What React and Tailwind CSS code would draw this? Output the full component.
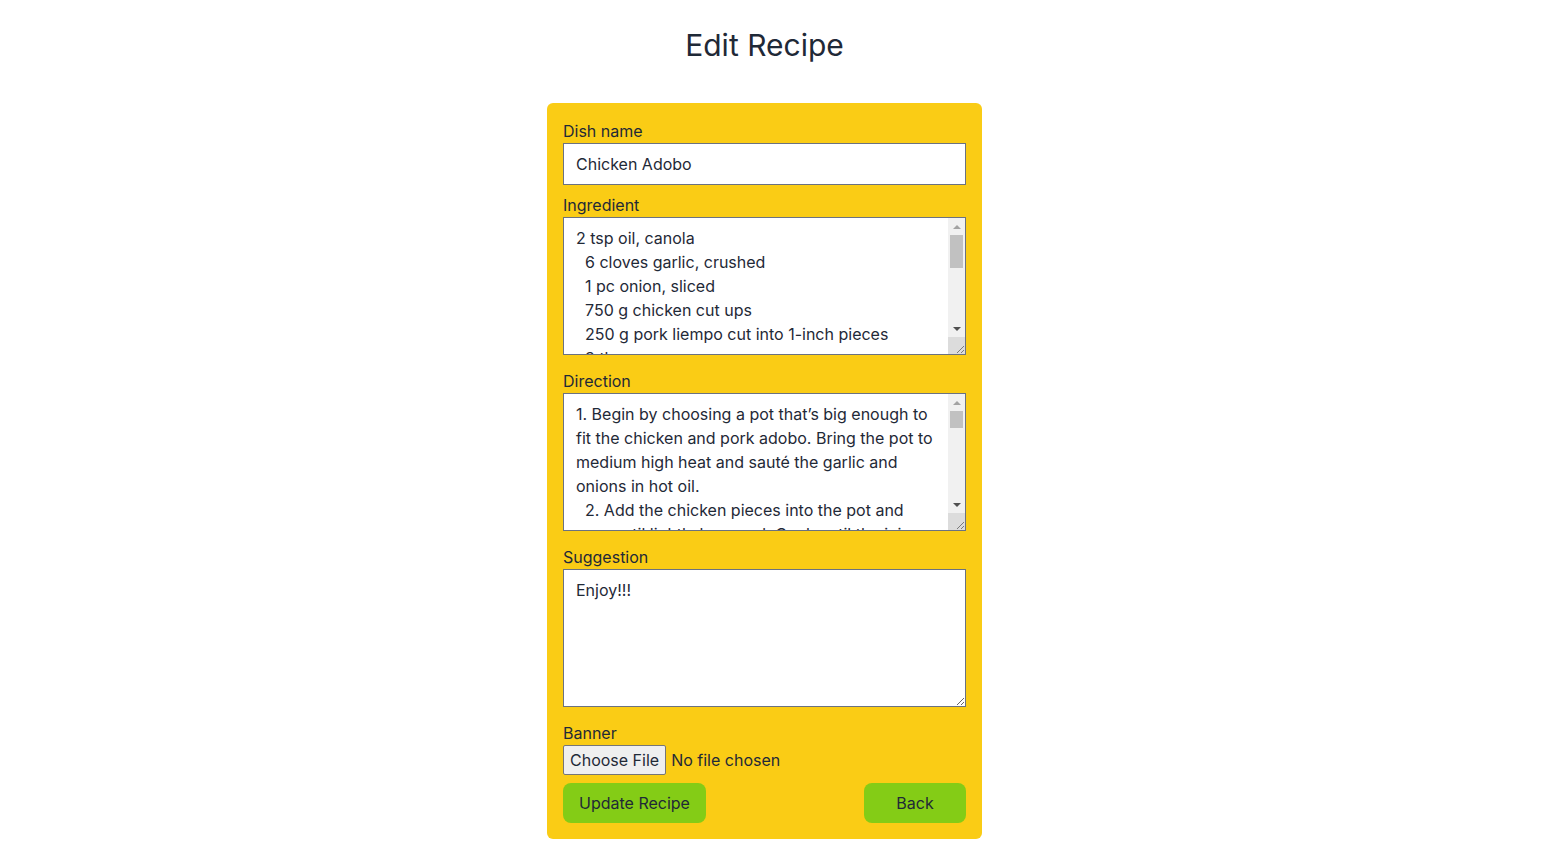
import { useState } from "react";

const INGREDIENTS = `2 tsp oil, canola
  6 cloves garlic, crushed
  1 pc onion, sliced
  750 g chicken cut ups
  250 g pork liempo cut into 1-inch pieces
  3 tbsp soy sauce
  1/2 cup vinegar
  1 cup water
  3 pcs bay leaves
  1 tsp whole peppercorns
  2 tbsp brown sugar
  1 pc potato, quartered
  salt to taste`;

const DIRECTIONS = `1. Begin by choosing a pot that’s big enough to fit the chicken and pork adobo. Bring the pot to medium high heat and sauté the garlic and onions in hot oil.
  2. Add the chicken pieces into the pot and sear until lightly browned. Cook until the juices run clear.
  3. Add the pork liempo and cook until the fat renders and the pieces turn golden.
  4. Pour in the soy sauce, vinegar and water. Add the bay leaves and peppercorns. Let it boil without stirring for 5 minutes.
  5. Lower the heat, cover and simmer for 30 to 40 minutes or until the meat is tender.
  6. Add the brown sugar and potatoes, then season with salt. Simmer until the sauce thickens and coats the meat.
  7. Remove the bay leaves, taste and adjust the seasoning.
  8. Serve hot with steamed rice.`;

// classic chrome scrollbar column drawn beside the textarea
function ScrollBar({ thumb }) {
  return (
    <div className="flex w-[17px] shrink-0 flex-col bg-[#f1f1f1]">
      <div className="flex h-[17px] items-center justify-center">
        <svg width="8" height="4" viewBox="0 0 8 4">
          <path d="M0 4 L4 0 L8 4 Z" fill="#a3a3a3" />
        </svg>
      </div>
      <div className="flex-1 px-[2px]">
        <div className={`${thumb} bg-[#c1c1c1]`} />
      </div>
      <div className="flex h-[17px] items-center justify-center">
        <svg width="8" height="4" viewBox="0 0 8 4">
          <path d="M0 0 L8 0 L4 4 Z" fill="#505050" />
        </svg>
      </div>
      <div className="h-[17px] bg-[#dcdcdc]">
        <svg width="17" height="17" viewBox="0 0 17 17">
          <path d="M16 9 L9 16 M16 13 L13 16" stroke="#7a7a7a" strokeWidth="1" />
        </svg>
      </div>
    </div>
  );
}

function ScrollArea({ value, onChange, thumb }) {
  return (
    <div className="flex h-[138px] w-full border border-[#6b7280] bg-white">
      <textarea
        value={value}
        onChange={onChange}
        className="min-w-0 flex-1 resize-none overflow-hidden bg-white px-3 py-2 text-base leading-6 text-[#1f2937] outline-none"
      />
      <ScrollBar thumb={thumb} />
    </div>
  );
}

export default function App() {
  const [dish, setDish] = useState("Chicken Adobo");
  const [ingredient, setIngredient] = useState(INGREDIENTS);
  const [direction, setDirection] = useState(DIRECTIONS);
  const [suggestion, setSuggestion] = useState("Enjoy!!!");

  const field =
    "block w-full border border-[#6b7280] bg-white px-3 py-2 text-base leading-6 text-[#1f2937] outline-none";

  return (
    <div className="min-h-screen bg-white pr-[26px] font-['Inter','Noto_Sans',sans-serif] text-[#1f2937]">
      <h1 className="pt-[27px] text-center text-3xl leading-9">Edit Recipe</h1>

      <form
        onSubmit={(e) => e.preventDefault()}
        className="mx-auto mt-10 w-[435px] rounded-md bg-[#facc15] p-4"
      >
        <label className="block leading-6">Dish name</label>
        <input
          type="text"
          value={dish}
          onChange={(e) => setDish(e.target.value)}
          className={field}
        />

        <label className="mt-2 block leading-6">Ingredient</label>
        <ScrollArea
          value={ingredient}
          onChange={(e) => setIngredient(e.target.value)}
          thumb="h-[33px]"
        />

        <label className="mt-[14px] block leading-6">Direction</label>
        <ScrollArea
          value={direction}
          onChange={(e) => setDirection(e.target.value)}
          thumb="h-[17px]"
        />

        <label className="mt-[14px] block leading-6">Suggestion</label>
        <textarea
          rows={5}
          value={suggestion}
          onChange={(e) => setSuggestion(e.target.value)}
          className={field}
        />

        <label className="mt-[14px] block leading-6">Banner</label>
        <input
          type="file"
          className="block text-base leading-6 text-[#1f2937] file:mr-[5px] file:rounded-[2px] file:border file:border-[#767676] file:bg-[#efefef] file:px-[6px] file:py-[2px] file:text-[#1f2937]"
        />

        {/* Buttons */}
        <div className="mt-2 flex justify-between">
          <button
            type="submit"
            className="h-10 rounded-lg bg-[#84cc16] px-4 text-[#1f2937]"
          >
            Update Recipe
          </button>
          <button
            type="button"
            className="h-10 w-[102px] rounded-lg bg-[#84cc16] text-[#1f2937]"
          >
            Back
          </button>
        </div>
      </form>
    </div>
  );
}
